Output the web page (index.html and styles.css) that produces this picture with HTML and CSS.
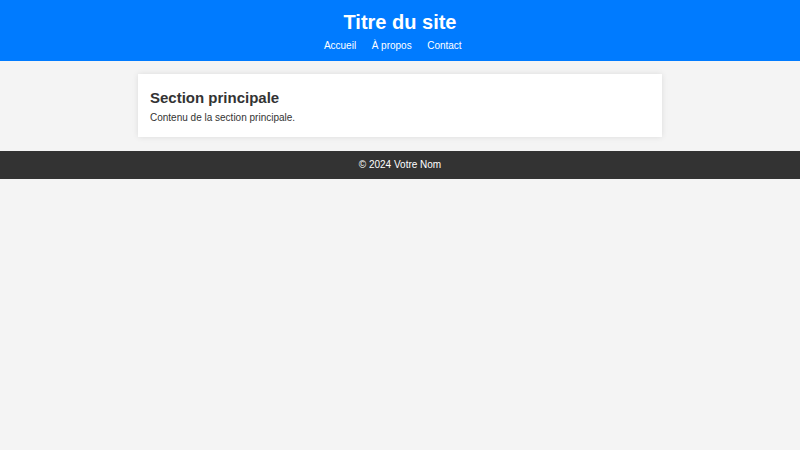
FILE: index.html
```html
<!DOCTYPE html>
<html lang="fr">
<head>
    <meta charset="UTF-8">
    <meta name="viewport" content="width=device-width, initial-scale=1.0">
    <title>Titre du site</title>
    <link rel="stylesheet" href="styles.css">
</head>
<body>
    <header class="header">
        <h1>Titre du site</h1>
        <nav class="nav">
            <a href="#">Accueil</a>
            <a href="#">À propos</a>
            <a href="#">Contact</a>
        </nav>
    </header>

    <main class="main">
        <section class="section">
            <h2>Section principale</h2>
            <p>Contenu de la section principale.</p>
        </section>
    </main>

    <footer class="footer">
        <p>&copy; 2024 Votre Nom</p>
    </footer>
</body>
</html>
```

FILE: styles.css
```css
* {
    margin: 0;
    padding: 0;
    box-sizing: border-box;
}

body {
    font-family: "Liberation Sans", Arial, sans-serif;
    font-size: 10px;
    background-color: #f4f4f4;
    color: #333;
}

.header {
    background-color: #007bff;
    color: white;
    text-align: center;
    padding: 11px 0 9px;
}

.header h1 {
    font-size: 20px;
    line-height: 23px;
    margin-bottom: 6px;
}

.nav {
    display: flex;
    justify-content: center;
    line-height: 11.5px;
    padding-left: 1px;
}

.nav a {
    color: white;
    text-decoration: none;
    margin-right: 15.5px;
}

.main {
    padding: 13px 0 14px;
}

.section {
    max-width: 524px;
    margin: 0 auto;
    background: white;
    padding: 15px 12px 14px;
    box-shadow: 0 0 6px rgba(0, 0, 0, 0.1);
}

.section h2 {
    font-size: 15px;
    line-height: 17px;
    margin-bottom: 6px;
}

.section p {
    line-height: 11.5px;
}

.footer {
    background-color: #333;
    color: white;
    text-align: center;
    padding: 8px 0;
    line-height: 11.5px;
}
```
